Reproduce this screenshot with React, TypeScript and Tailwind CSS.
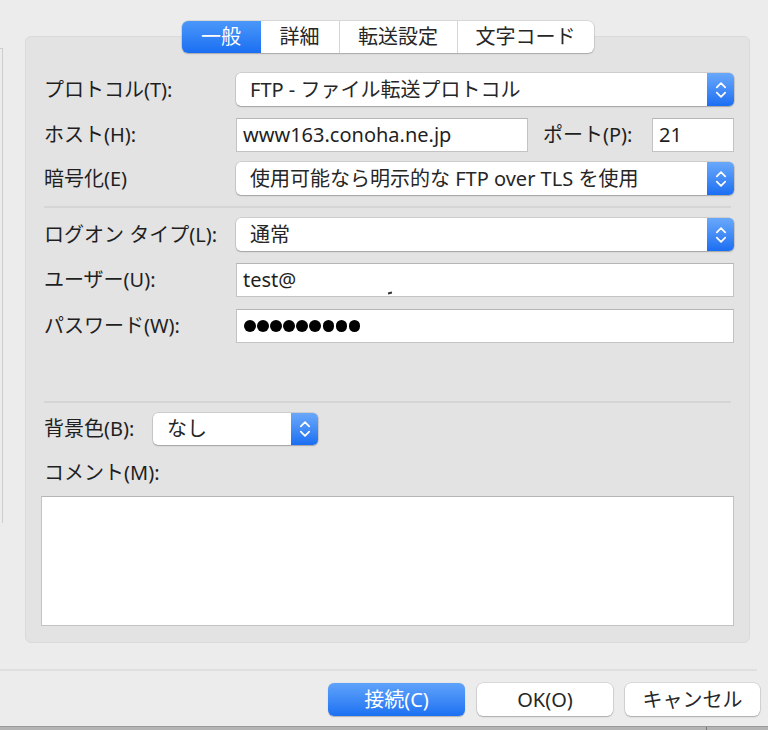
import React from "react";

const font = "font-['Noto_Sans','Noto_Sans_CJK_JP',sans-serif]";

// up/down chevrons for the popup buttons
const Stepper: React.FC = () => (
  <div className="flex h-full w-[27px] shrink-0 items-center justify-center rounded-r-[5px] bg-gradient-to-b from-[#69a8fa] to-[#1a6ef2]">
    <svg width="12" height="22" viewBox="0 0 12 22" fill="none">
      <path d="M1.8 8.4 L6 4.2 L10.2 8.4" stroke="white" strokeWidth="1.7" strokeLinecap="round" strokeLinejoin="round" />
      <path d="M1.8 13.6 L6 17.8 L10.2 13.6" stroke="white" strokeWidth="1.7" strokeLinecap="round" strokeLinejoin="round" />
    </svg>
  </div>
);

interface SelectProps {
  value: string;
  className?: string;
}

const Select: React.FC<SelectProps> = ({ value, className = "" }) => (
  <div
    className={`flex items-center rounded-[5px] bg-white shadow-[0_0_0_0.5px_rgba(0,0,0,0.18),0_1px_1.5px_rgba(0,0,0,0.22)] ${className}`}
  >
    <span className="flex-1 whitespace-nowrap pl-[14px] text-[20px] leading-[26px] text-[#262626]">{value}</span>
    <Stepper />
  </div>
);

const TextField: React.FC<{ className?: string; children?: React.ReactNode }> = ({ className = "", children }) => (
  <div
    className={`relative flex items-center whitespace-nowrap border border-[#c3c3c3] border-t-[#b5b5b5] bg-white pl-[6px] text-[20px] leading-[26px] text-[#1f1f1f] ${className}`}
  >
    {children}
  </div>
);

const Label: React.FC<{ children: React.ReactNode; className?: string }> = ({ children, className = "" }) => (
  <span className={`ml-[3px] whitespace-nowrap text-[20px] leading-[26px] text-[#1f1f1f] ${className}`}>{children}</span>
);

const tabs = ["一般", "詳細", "転送設定", "文字コード"];
const tabWidths = ["w-[79px]", "w-[78px]", "w-[118px]", "w-[137px]"];

const App: React.FC = () => {
  return (
    <div className={`flex h-[730px] w-[768px] flex-col overflow-hidden bg-[#ececec] ${font}`}>
      <div className="flex pt-[21px]">
        {/* edge of the site list on the left */}
        <div className="mt-[27px] h-[475px] w-[3px] shrink-0 border-t border-r border-[#cdcdcd]" />

        <div className="ml-[22px] flex w-[725px] flex-col">
          {/* segmented tabs */}
          <div className="relative z-10 flex h-[32px] justify-center">
            <div className="flex h-full rounded-[6px] bg-white shadow-[0_0_0_0.5px_rgba(0,0,0,0.16),0_1px_1.5px_rgba(0,0,0,0.2)]">
              {tabs.map((t, i) => (
                <div
                  key={t}
                  className={`flex h-full items-center justify-center whitespace-nowrap text-[20px] leading-[26px] ${tabWidths[i]} ${
                    i === 0
                      ? "rounded-l-[6px] bg-gradient-to-b from-[#4a97f9] to-[#1a6ef2] text-white"
                      : "text-[#262626]"
                  } ${i > 1 ? "border-l border-[#d6d6d6]" : ""}`}
                >
                  {t}
                </div>
              ))}
            </div>
          </div>

          {/* group box */}
          <div className="-mt-[17px] flex h-[607px] flex-col rounded-[6px] border border-[#dadada] bg-[#e3e3e3] px-[15px] pt-[36px]">
            <div className="flex h-[33px] items-center">
              <Label className="w-[192px]">プロトコル(T):</Label>
              <Select value="FTP - ファイル転送プロトコル" className="h-full flex-1" />
            </div>

            <div className="mt-[12px] flex h-[34px] items-center">
              <Label className="w-[192px]">ホスト(H):</Label>
              <TextField className="h-full w-[292px]">www163.conoha.ne.jp</TextField>
              <span className="ml-[15px] w-[109px] whitespace-nowrap text-[20px] leading-[26px] text-[#1f1f1f]">ポート(P):</span>
              <TextField className="h-full flex-1">21</TextField>
            </div>

            <div className="mt-[10px] flex h-[33px] items-center">
              <Label className="w-[192px]">暗号化(E)</Label>
              <Select value="使用可能なら明示的な FTP over TLS を使用" className="h-full flex-1" />
            </div>

            <div className="mx-[3px] mt-[11px] h-[2px] bg-[#d5d5d5]" />

            <div className="mt-[10px] flex h-[33px] items-center">
              <Label className="w-[192px]">ログオン タイプ(L):</Label>
              <Select value="通常" className="h-full flex-1" />
            </div>

            <div className="mt-[12px] flex h-[34px] items-center">
              <Label className="w-[192px]">ユーザー(U):</Label>
              <TextField className="h-full flex-1">
                test@
                <span className="absolute left-[151px] top-[28px] h-[2px] w-[4px] -rotate-12 bg-[#333]" />
              </TextField>
            </div>

            <div className="mt-[12px] flex h-[34px] items-center">
              <Label className="w-[192px]">パスワード(W):</Label>
              <TextField className="h-full flex-1">
                <div className="flex gap-[1.6px] pl-[1px]">
                  {Array.from({ length: 9 }).map((_, i) => (
                    <span key={i} className="h-[11.5px] w-[11.5px] rounded-full bg-black" />
                  ))}
                </div>
              </TextField>
            </div>

            <div className="mx-[3px] mt-[58px] h-[2px] bg-[#d5d5d5]" />

            <div className="mt-[10px] flex h-[32px] items-center">
              <Label className="w-[109px]">背景色(B):</Label>
              <Select value="なし" className="h-full w-[165px]" />
            </div>

            <div className="mt-[16px] flex h-[24px] items-center">
              <Label>コメント(M):</Label>
            </div>

            <div className="mt-[11px] h-[130px] border border-[#c3c3c3] border-t-[#b5b5b5] bg-white" />
          </div>
        </div>
      </div>

      <div className="mt-[26px] mr-[11px] h-[2px] bg-[#dfdfdf]" />

      {/* dialog buttons */}
      <div className="mt-[12px] flex h-[33px] justify-end gap-[12px] pr-[8px]">
        <button className="h-full w-[137px] whitespace-nowrap rounded-[6px] bg-gradient-to-b from-[#5fa3fa] to-[#1b70f2] text-[20px] leading-[26px] text-white shadow-[0_0.5px_1px_rgba(0,0,0,0.25)]">
          接続(C)
        </button>
        <button className="h-full w-[136px] whitespace-nowrap rounded-[6px] bg-white text-[20px] leading-[26px] text-[#262626] shadow-[0_0_0_0.5px_rgba(0,0,0,0.16),0_1px_1.5px_rgba(0,0,0,0.22)]">
          OK(O)
        </button>
        <button className="h-full w-[135px] whitespace-nowrap rounded-[6px] bg-white text-[20px] leading-[26px] text-[#262626] shadow-[0_0_0_0.5px_rgba(0,0,0,0.16),0_1px_1.5px_rgba(0,0,0,0.22)]">
          キャンセル
        </button>
      </div>

      <div className="mt-[10px] flex h-[4px] border-t border-[#9a9a9a] bg-[#b4b4b4]">
        <div className="ml-[706px] w-[1px] bg-[#777]" />
      </div>
    </div>
  );
};

export default App;
